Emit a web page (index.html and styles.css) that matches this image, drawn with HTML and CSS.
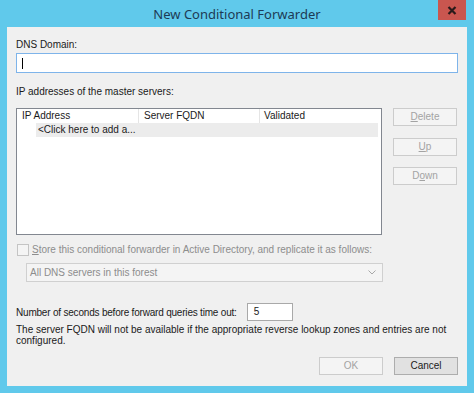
FILE: index.html
```html
<!DOCTYPE html>
<html>
<head>
<meta charset="utf-8">
<link rel="stylesheet" href="styles.css">
</head>
<body>
<div class="window">
  <div class="titlebar">
    <div class="title">New Conditional Forwarder</div>
    <div class="close">
      <svg width="10" height="9" viewBox="0 0 10 9"><path d="M1.5 1 L8.5 8 M8.5 1 L1.5 8" stroke="#2a1a1a" stroke-width="2.2" fill="none"/></svg>
    </div>
  </div>
  <div class="client">
    <div class="label lbl-dns">DNS Domain:</div>
    <div class="textbox focused"><span class="caret"></span></div>
    <div class="label lbl-ip">IP addresses of the master servers:</div>
    <div class="listrow">
      <div class="listview">
        <div class="lv-header">
          <div class="col c1">IP Address</div>
          <div class="col c2">Server FQDN</div>
          <div class="col c3">Validated</div>
        </div>
        <div class="lv-item">&lt;Click here to add a...</div>
      </div>
      <div class="sidebtns">
        <div class="btn disabled"><span class="u">D</span>elete</div>
        <div class="btn disabled b-up"><span class="u">U</span>p</div>
        <div class="btn disabled b-down">D<span class="u">o</span>wn</div>
      </div>
    </div>
    <div class="checkrow">
      <span class="checkbox"></span>
      <span class="disabled-text"><span class="u">S</span>tore this conditional forwarder in Active Directory, and replicate it as follows:</span>
    </div>
    <div class="combo">
      <span class="disabled-text">All DNS servers in this forest</span>
      <svg class="chev" width="8" height="5" viewBox="0 0 8 5"><path d="M0.5 0.5 L4 4 L7.5 0.5" stroke="#a8a8a8" stroke-width="1" fill="none"/></svg>
    </div>
    <div class="timeoutrow">
      <span class="label tight">Number of seconds before forward queries time out:</span>
      <div class="numbox">5</div>
    </div>
    <div class="note">The server FQDN will not be available if the appropriate reverse lookup zones and entries are not configured.</div>
    <div class="footer">
      <div class="btn disabled">OK</div>
      <div class="btn enabled">Cancel</div>
    </div>
  </div>
</div>
</body>
</html>
```

FILE: styles.css
```css
html, body {
  margin: 0;
  padding: 0;
}
body {
  width: 474px;
  height: 393px;
  background: #60c9eb;
  font-family: "Liberation Sans", Arial, sans-serif;
  font-size: 10px;
  color: #1a1a1a;
  overflow: hidden;
}
.window {
  display: flex;
  flex-direction: column;
  height: 393px;
}
.titlebar {
  height: 27px;
  flex: none;
  display: flex;
  justify-content: center;
  position: relative;
}
.title {
  font-family: "Noto Sans", "Open Sans", sans-serif;
  font-size: 13px;
  color: #1d3a55;
  line-height: 28px;
}
.close {
  position: absolute;
  left: 438px;
  top: 0;
  width: 28px;
  height: 20px;
  background: #c9564f;
  display: flex;
  align-items: center;
  justify-content: center;
}
.client {
  margin: 0 7px 0 7px;
  height: 359px;
  flex: none;
  box-sizing: border-box;
  background: #f0f0f0;
  padding: 0 9px;
  display: flex;
  flex-direction: column;
}
.label {
  line-height: 13px;
  white-space: nowrap;
}
.tight {
  letter-spacing: -0.2px;
}
.lbl-dns {
  margin-top: 11px;
}
.textbox {
  margin-top: 2px;
  height: 18px;
  border: 1px solid #7eb4ea;
  background: #fff;
  display: flex;
  align-items: center;
}
.caret {
  width: 1px;
  height: 11px;
  background: #000;
  margin-left: 5px;
}
.lbl-ip {
  margin-top: 12px;
}
.listrow {
  margin-top: 10px;
  display: flex;
  gap: 11px;
}
.listview {
  width: 364px;
  height: 125px;
  border: 1px solid #828790;
  background: #fff;
}
.lv-header {
  display: flex;
  height: 14px;
  line-height: 14px;
}
.col {
  padding-left: 5px;
  box-sizing: border-box;
  border-right: 1px solid #e5e5e5;
}
.c1 { width: 122px; }
.c2 { width: 121px; }
.c3 { width: 120px; border-right: none; padding-left: 4px; }
.lv-item {
  margin-left: 19px;
  margin-right: 3px;
  height: 14px;
  line-height: 14px;
  background: #ececec;
  padding-left: 2px;
}
.sidebtns {
  display: flex;
  flex-direction: column;
}
.btn {
  width: 62px;
  height: 16px;
  line-height: 16px;
  text-align: center;
  border: 1px solid #cccccc;
  background: #f4f4f4;
}
.btn.disabled {
  color: #a3a3a3;
}
.btn.enabled {
  border-color: #adadad;
  background: #e1e1e1;
  color: #1a1a1a;
}
.b-up { margin-top: 12px; }
.b-down { margin-top: 11px; }
.u {
  text-decoration: underline;
}
.checkrow {
  margin-top: 8px;
  display: flex;
  align-items: center;
  height: 13px;
  white-space: nowrap;
}
.checkbox {
  width: 10px;
  height: 10px;
  border: 1px solid #c4c4c4;
  background: #f4f4f4;
  margin-left: 1px;
  margin-right: 3px;
}
.disabled-text {
  color: #8d8d8d;
}
.combo {
  margin-top: 7px;
  margin-left: 10px;
  box-sizing: border-box;
  width: 357px;
  height: 19px;
  border: 1px solid #d0d0d0;
  background: #f4f4f4;
  display: flex;
  align-items: center;
  justify-content: space-between;
  padding: 0 6px 0 3px;
}
.timeoutrow {
  margin-top: 21px;
  display: flex;
  align-items: center;
  gap: 10px;
}
.numbox {
  box-sizing: border-box;
  width: 46px;
  height: 18px;
  line-height: 16px;
  border: 1px solid #a9a9a9;
  background: #fff;
  padding-left: 6px;
}
.note {
  margin-top: 3px;
  line-height: 11px;
  width: 440px;
}
.footer {
  margin-top: auto;
  margin-bottom: 11px;
  display: flex;
  justify-content: flex-end;
  gap: 11px;
}
```
